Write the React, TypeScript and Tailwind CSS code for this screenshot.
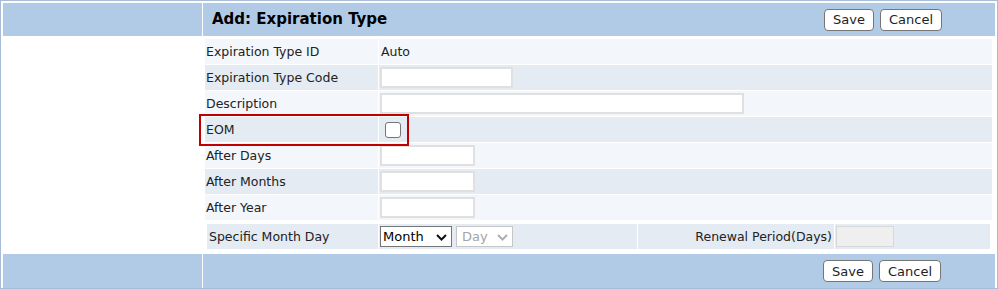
import React from "react";

const rows = [
  { label: "Expiration Type ID", kind: "text" },
  { label: "Expiration Type Code", kind: "code" },
  { label: "Description", kind: "desc" },
  { label: "EOM", kind: "check" },
  { label: "After Days", kind: "small" },
  { label: "After Months", kind: "small" },
  { label: "After Year", kind: "small" },
];

const ActionButtons = () => (
  <div className="flex items-center gap-[6px]">
    <button className="w-[50px] h-[22px] border border-[#767676] rounded-[4px] bg-white text-[13px] text-[#1e1e1e] leading-none">
      Save
    </button>
    <button className="w-[62px] h-[22px] border border-[#767676] rounded-[4px] bg-white text-[13px] text-[#1e1e1e] leading-none">
      Cancel
    </button>
  </div>
);

const Chevron = ({ color }: { color: string }) => (
  <svg width="11" height="7" viewBox="0 0 11 7" className="absolute right-[5px] top-[8px] pointer-events-none">
    <path d="M1 1 L5.5 5.5 L10 1" fill="none" stroke={color} strokeWidth="2" />
  </svg>
);

const App = () => {
  return (
    <div className="relative w-[998px] h-[289px] border border-[#a7bcd8] pt-[2px] px-[2px] bg-white font-['DejaVu_Sans',Verdana,sans-serif] text-[12.5px] text-[#222]">
      {/* header */}
      <div className="flex gap-px h-[33px]">
        <div className="w-[199px] bg-[#b1cbe7]" />
        <div className="flex-1 bg-[#b1cbe7] flex items-center justify-between pl-[9px] pr-[53px]">
          <span className="text-[15px] font-bold text-black">Add: Expiration Type</span>
          <ActionButtons />
        </div>
      </div>

      {/* body */}
      <div className="flex gap-px h-[218px]">
        <div className="w-[199px]" />
        <div className="flex-1 pt-[3px] pl-[2px] pr-[3px]">
          <div className="flex flex-col gap-px">
            {rows.map((r, i) => {
              const bg = i % 2 === 0 ? "bg-[#f3f6fa]" : "bg-[#e4ebf3]";
              return (
                <div key={r.label} className="flex gap-px h-[25px]">
                  <div className={`w-[173px] shrink-0 pl-[1px] pt-[2px] flex items-center ${bg}`}>{r.label}</div>
                  <div className={`flex-1 flex items-center pl-[1px] ${bg}`}>
                    {r.kind === "text" && <span className="pl-[1px] pt-[2px]">Auto</span>}
                    {r.kind === "code" && (
                      <input className="w-[133px] h-[21px] border-2 border-[#e0e0e0] bg-white" />
                    )}
                    {r.kind === "desc" && (
                      <input className="w-[364px] h-[21px] border-2 border-[#e0e0e0] bg-white" />
                    )}
                    {r.kind === "small" && (
                      <input className="w-[95px] h-[21px] border-2 border-[#e0e0e0] bg-white" />
                    )}
                    {r.kind === "check" && (
                      <input
                        type="checkbox"
                        className="appearance-none ml-[5px] w-[16px] h-[16px] border border-[#767676] rounded-[3px] bg-white"
                      />
                    )}
                  </div>
                </div>
              );
            })}
          </div>

          <div className="flex gap-px h-[25px] mt-[4px] mx-[2px] bg-white">
            <div className="w-[171px] shrink-0 pl-[2px] pt-[2px] flex items-center bg-[#e4ebf3]">Specific Month Day</div>
            <div className="w-[258px] shrink-0 flex items-center gap-[4px] pl-[1px] bg-[#e4ebf3]">
              <div className="relative">
                <select className="appearance-none w-[72px] h-[21px] border border-[#767676] bg-white pl-[2px] text-[13px] text-black">
                  <option>Month</option>
                </select>
                <Chevron color="#111" />
              </div>
              <div className="relative">
                <select
                  disabled
                  className="appearance-none w-[57px] h-[21px] border border-[#c6c6c6] bg-white pl-[5px] text-[13px] text-[#a5a5a5]"
                >
                  <option>Day</option>
                </select>
                <Chevron color="#b0b0b0" />
              </div>
            </div>
            <div className="w-[196px] shrink-0 flex items-center justify-end pr-[2px] pt-[2px] bg-[#e4ebf3]">
              Renewal Period(Days)
            </div>
            <div className="flex-1 flex items-center pl-[1px] bg-[#e4ebf3]">
              <input
                disabled
                className="w-[58px] h-[21px] border border-[#d8d8d8] bg-[#efefef]"
              />
            </div>
          </div>
        </div>
      </div>

      {/* footer */}
      <div className="flex gap-px h-[34px]">
        <div className="w-[199px] bg-[#b1cbe7]" />
        <div className="flex-1 bg-[#b1cbe7] flex items-center justify-end pr-[54px]">
          <ActionButtons />
        </div>
      </div>

      {/* highlight around EOM row */}
      <div className="absolute left-[198px] top-[113px] w-[210px] h-[32px] border-2 border-[#c00000] pointer-events-none" />
    </div>
  );
};

export default App;
